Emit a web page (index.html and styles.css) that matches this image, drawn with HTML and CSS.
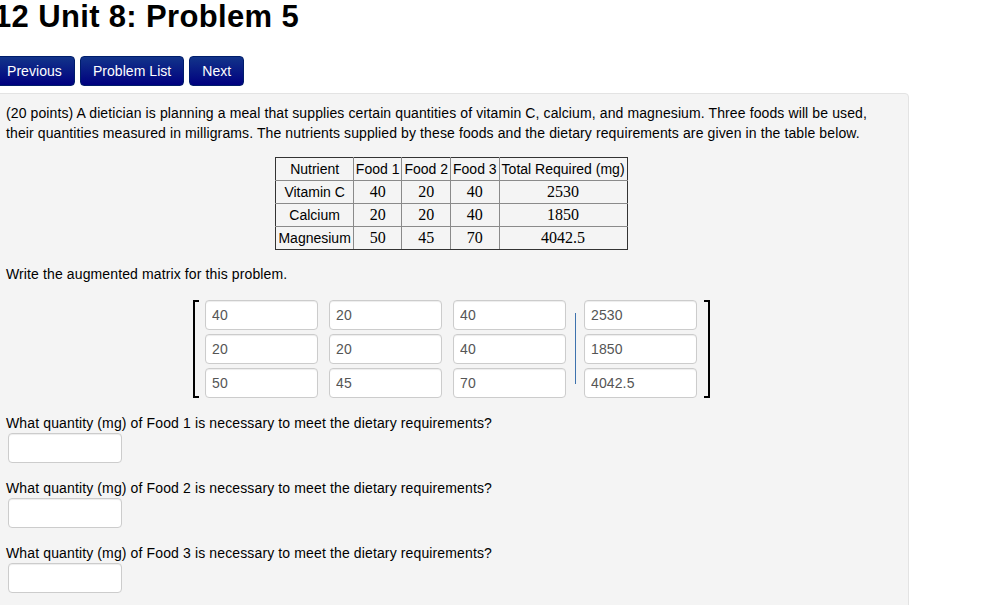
FILE: index.html
```html
<!DOCTYPE html>
<html lang="en">
<head>
<meta charset="utf-8">
<title>Unit 8: Problem 5</title>
<link rel="stylesheet" href="styles.css">
</head>
<body>
<div class="page">
  <h1 class="title">12 Unit 8: Problem 5</h1>
  <div class="nav">
    <a class="btn">Previous</a>
    <a class="btn">Problem List</a>
    <a class="btn">Next</a>
  </div>
  <div class="panel">
    <p class="intro">(20 points) A dietician is planning a meal that supplies certain quantities of vitamin C, calcium, and magnesium. Three foods will be used,<br>their quantities measured in milligrams. The nutrients supplied by these foods and the dietary requirements are given in the table below.</p>
    <table class="nutri">
      <tr><td>Nutrient</td><td>Food 1</td><td>Food 2</td><td>Food 3</td><td>Total Required (mg)</td></tr>
      <tr><td>Vitamin C</td><td class="num">40</td><td class="num">20</td><td class="num">40</td><td class="num">2530</td></tr>
      <tr><td>Calcium</td><td class="num">20</td><td class="num">20</td><td class="num">40</td><td class="num">1850</td></tr>
      <tr><td>Magnesium</td><td class="num">50</td><td class="num">45</td><td class="num">70</td><td class="num">4042.5</td></tr>
    </table>
    <p class="prompt">Write the augmented matrix for this problem.</p>
    <div class="matrix">
      <span class="bracket bracket-left"></span>
      <div class="coeffs">
        <input class="cell" type="text" value="40">
        <input class="cell" type="text" value="20">
        <input class="cell" type="text" value="40">
        <input class="cell" type="text" value="20">
        <input class="cell" type="text" value="20">
        <input class="cell" type="text" value="40">
        <input class="cell" type="text" value="50">
        <input class="cell" type="text" value="45">
        <input class="cell" type="text" value="70">
      </div>
      <span class="sep"></span>
      <div class="consts">
        <input class="cell" type="text" value="2530">
        <input class="cell" type="text" value="1850">
        <input class="cell" type="text" value="4042.5">
      </div>
      <span class="bracket bracket-right"></span>
    </div>
    <div class="question">
      <p class="qtext">What quantity (mg) of Food 1 is necessary to meet the dietary requirements?</p>
      <input class="answer" type="text">
    </div>
    <div class="question">
      <p class="qtext">What quantity (mg) of Food 2 is necessary to meet the dietary requirements?</p>
      <input class="answer" type="text">
    </div>
    <div class="question">
      <p class="qtext">What quantity (mg) of Food 3 is necessary to meet the dietary requirements?</p>
      <input class="answer" type="text">
    </div>
  </div>
</div>
</body>
</html>
```

FILE: styles.css
```css
html, body {
  margin: 0;
  padding: 0;
  background: #ffffff;
  overflow: hidden;
}

body {
  font-family: "Liberation Sans", Arial, sans-serif;
  font-size: 14px;
  color: #000;
}

.page {
  margin-left: -6px;
  width: 915px;
}

.title {
  margin: 0;
  font-size: 31px;
  line-height: 33px;
  letter-spacing: 0.35px;
  font-weight: bold;
  color: #000;
}

.nav {
  margin-top: 23px;
  display: flex;
  gap: 5px;
}

.btn {
  display: block;
  padding: 4px 12px;
  line-height: 20px;
  font-size: 14px;
  letter-spacing: 0.05px;
  color: #fff;
  background: linear-gradient(#12348a, #00007f);
  border: 1px solid #001d6b;
  border-radius: 4px;
  cursor: pointer;
}

.panel {
  margin-top: 7px;
  box-sizing: border-box;
  width: 915px;
  min-height: 620px;
  padding: 9px 11px 20px 11px;
  background: #f4f4f4;
  border: 1px solid #e3e3e3;
  border-radius: 4px;
}

.intro {
  margin: 0;
  line-height: 20px;
  letter-spacing: 0.11px;
}

.nutri {
  margin: 14px auto 0;
  border-collapse: collapse;
}

.nutri td {
  border: 1px solid #8a8a8a;
  padding: 0 2px;
  height: 22px;
  line-height: 20px;
  text-align: center;
  white-space: nowrap;
}

.nutri tr:first-child td { border-top-color: #333; }
.nutri tr:last-child td { border-bottom-color: #333; }
.nutri td:first-child { border-left-color: #333; }
.nutri td:last-child { border-right-color: #333; }

.nutri .num {
  font-family: "Liberation Serif", "Times New Roman", serif;
  font-size: 16px;
}

.prompt {
  margin: 14px 0 0;
  line-height: 20px;
  letter-spacing: 0.12px;
}

.matrix {
  margin-top: 16px;
  margin-bottom: 3px;
  display: flex;
  justify-content: center;
  align-items: stretch;
}

.bracket {
  width: 4px;
  border-top: 2px solid #000;
  border-bottom: 2px solid #000;
}

.bracket-left {
  border-left: 2px solid #000;
  margin-right: 6px;
}

.bracket-right {
  border-right: 2px solid #000;
  margin-left: 7px;
}

.coeffs {
  display: grid;
  grid-template-columns: 113px 113px 113px;
  column-gap: 11px;
  row-gap: 4px;
}

.consts {
  display: grid;
  grid-template-columns: 113px;
  row-gap: 4px;
}

.sep {
  width: 1px;
  background: #3d72ad;
  margin: 13px 8px 14px 9px;
}

.cell,
.answer {
  box-sizing: border-box;
  height: 30px;
  margin: 0;
  padding: 0 6px;
  font-family: "Liberation Sans", Arial, sans-serif;
  font-size: 14px;
  letter-spacing: 0.12px;
  color: #555;
  background: #fff;
  border: 1px solid #cccccc;
  border-radius: 4px;
  box-shadow: inset 0 1px 1px rgba(0, 0, 0, 0.075);
  outline: none;
}

.cell {
  width: 113px;
}

.question {
  margin-top: 15px;
}

.qtext {
  margin: 0;
  line-height: 20px;
  letter-spacing: 0.13px;
}

.answer {
  display: block;
  width: 114px;
  margin-left: 2px;
}
```
